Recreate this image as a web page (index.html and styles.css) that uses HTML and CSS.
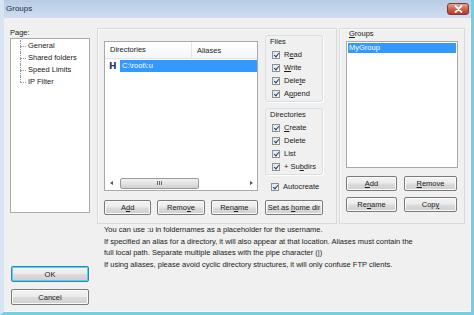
FILE: index.html
```html
<!DOCTYPE html>
<html>
<head>
    <meta charset="UTF-8">
    <title>Groups</title>
    <link rel="stylesheet" href="styles.css">
</head>
<body>
    <div class="window">
        <div class="titlebar">
            <span class="title">Groups</span>
            <span class="close">
                <svg width="9" height="8" viewBox="0 0 9 8"><path d="M1.5 1 L7.5 7 M7.5 1 L1.5 7" stroke="#fff" stroke-width="1.8" stroke-linecap="round"/></svg>
            </span>
        </div>
        <div class="client">
            <div class="side">
                <div class="label">Page:</div>
                <div class="tree">
                    <div class="node">General</div>
                    <div class="node">Shared folders</div>
                    <div class="node">Speed Limits</div>
                    <div class="node last">IP Filter</div>
                </div>
                <div class="dialog-buttons">
                    <button class="btn default">OK</button>
                    <button class="btn">Cancel</button>
                </div>
            </div>
            <div class="main">
                <div class="panels">
                    <div class="panel shares">
                        <div class="listview">
                            <div class="lv-head">
                                <span class="col-dir">Directories</span>
                                <span class="col-alias">Aliases</span>
                            </div>
                            <div class="lv-row">
                                <span class="home">H</span>
                                <span class="sel">C:\root\:u</span>
                            </div>
                            <div class="hscroll">
                                <span class="arrow left"></span>
                                <span class="track"><span class="thumb"><span class="grip"></span></span></span>
                                <span class="arrow right"></span>
                            </div>
                        </div>
                        <div class="perms">
                            <div class="groupbox">
                                <div class="legend">Files</div>
                                <div class="check"><span class="box"></span>R<u>e</u>ad</div>
                                <div class="check"><span class="box"></span><u>W</u>rite</div>
                                <div class="check"><span class="box"></span>Dele<u>t</u>e</div>
                                <div class="check"><span class="box"></span>A<u>p</u>pend</div>
                            </div>
                            <div class="groupbox">
                                <div class="legend">Directories</div>
                                <div class="check"><span class="box"></span><u>C</u>reate</div>
                                <div class="check"><span class="box"></span>Delete</div>
                                <div class="check"><span class="box"></span>List</div>
                                <div class="check"><span class="box"></span>+ Su<u>b</u>dirs</div>
                            </div>
                            <div class="check auto"><span class="box"></span>Autocreate</div>
                        </div>
                        <div class="row-buttons">
                            <button class="btn">A<u>d</u>d</button>
                            <button class="btn">Remo<u>v</u>e</button>
                            <button class="btn">Ren<u>a</u>me</button>
                        </div>
                        <button class="btn">Set as <u>h</u>ome dir</button>
                    </div>
                    <div class="panel groups">
                        <div class="label"><u>G</u>roups</div>
                        <div class="listbox">
                            <div class="item selected">MyGroup</div>
                        </div>
                        <div class="group-buttons">
                            <button class="btn"><u>A</u>dd</button>
                            <button class="btn"><u>R</u>emove</button>
                            <button class="btn">Re<u>n</u>ame</button>
                            <button class="btn">Cop<u>y</u></button>
                        </div>
                    </div>
                </div>
                <div class="notes">
                    <p>You can use :u in foldernames as a placeholder for the username.</p>
                    <p>If specified an alias for a directory, it will also appear at that location. Aliases must contain the<br>full local path. Separate multiple aliases with the pipe character (|)</p>
                    <p>If using aliases, please avoid cyclic directory structures, it will only confuse FTP clients.</p>
                </div>
            </div>
        </div>
    </div>
</body>
</html>
```

FILE: styles.css
```css
* {
    box-sizing: border-box;
}
body {
    margin: 0;
    font-family: "Liberation Sans", Arial, sans-serif;
    font-size: 7.5px;
    color: #1a1a1a;
    background: #fff;
}
.window {
    width: 474px;
    height: 315px;
    display: flex;
    flex-direction: column;
    background: #f0f0f0;
    border-left: 4px solid #d7e4f2;
    border-right: 3px solid #74cfe6;
    border-bottom: 3px solid #74cfe6;
}
.titlebar {
    height: 18px;
    flex: none;
    display: flex;
    align-items: center;
    justify-content: space-between;
    padding: 0 2px 1px 2px;
    background: linear-gradient(#b7cce5, #cfdeef);
}
.title {
    font-size: 8px;
    color: #1e2a3a;
}
.close {
    width: 22px;
    height: 12px;
    margin-top: 1px;
    display: flex;
    align-items: center;
    justify-content: center;
    border: 1px solid #7d3a30;
    border-radius: 3px;
    background: linear-gradient(#e6a497, #d0604c 50%, #b8372a);
}
.client {
    flex: 1;
    display: flex;
    gap: 7px;
    padding: 10px 0 0 6px;
    border-right: 1px solid #fbfbfb;
    border-bottom: 1px solid #fbfbfb;
}

/* left column */
.side {
    width: 80px;
    display: flex;
    flex-direction: column;
    padding-bottom: 6px;
}
.label {
    height: 9px;
    line-height: 9px;
}
.tree {
    margin-top: 1px;
    height: 175px;
    background: #fff;
    border: 1px solid #a9a9a9;
    padding-top: 1px;
    position: relative;
}
.node {
    position: relative;
    height: 12px;
    line-height: 12px;
    padding-left: 17px;
}
.node::before {
    content: "";
    position: absolute;
    left: 9px;
    top: 6px;
    width: 6px;
    border-top: 1px dotted #9a9a9a;
}
.node::after {
    content: "";
    position: absolute;
    left: 9px;
    top: 0;
    height: 12px;
    border-left: 1px dotted #9a9a9a;
}
.node.last::after {
    height: 6px;
}
.dialog-buttons {
    margin-top: auto;
    display: flex;
    flex-direction: column;
    gap: 7px;
    padding-left: 1px;
    width: 79px;
}
.dialog-buttons .btn {
    height: 16px;
}

/* buttons */
.btn {
    height: 15px;
    padding: 0;
    font-family: inherit;
    font-size: 7.5px;
    color: #1a1a1a;
    border: 1px solid #7a7a7a;
    border-radius: 2px;
    background: linear-gradient(#f3f3f3, #ebebeb 48%, #dcdcdc 52%, #cfcfcf);
    box-shadow: inset 0 0 0 1px #fafafa;
}
.btn.default {
    border-color: #3c7fb1;
    box-shadow: inset 0 0 0 1px #48d7f8;
}

/* middle + right panels */
.main {
    flex: 1;
    display: flex;
    flex-direction: column;
}
.panels {
    display: flex;
    gap: 2px;
}
.panel {
    border: 1px solid #d9d9d9;
    box-shadow: inset 1px 1px 0 #fafafa;
}
.shares {
    width: 240px;
    display: grid;
    grid-template-columns: 154px 58px;
    column-gap: 7px;
    row-gap: 7px;
    padding: 6px 0 8px 6px;
}
.listview {
    margin-top: 6px;
    height: 150px;
    display: flex;
    flex-direction: column;
    background: #fff;
    border: 1px solid #a9a9a9;
}
.lv-head {
    height: 17px;
    display: flex;
    align-items: center;
    background: linear-gradient(#ffffff, #f4f5f7);
    border-bottom: 1px solid #e3e4e6;
}
.col-dir {
    width: 87px;
    padding-left: 5px;
    border-right: 1px solid #e3e4e6;
    line-height: 16px;
}
.col-alias {
    padding-left: 5px;
}
.lv-row {
    margin-top: 1px;
    height: 12px;
    display: flex;
    align-items: center;
}
.home {
    width: 15px;
    padding-left: 4px;
    font-family: "DejaVu Sans", sans-serif;
    font-weight: bold;
    font-size: 9px;
    color: #223a66;
}
.sel {
    flex: 1;
    height: 12px;
    line-height: 12px;
    padding-left: 2px;
    background: #3399ff;
    color: #fff;
}
.hscroll {
    margin-top: auto;
    height: 12px;
    display: flex;
    align-items: center;
    margin-bottom: 1px;
}
.arrow {
    width: 12px;
    display: flex;
    justify-content: center;
}
.arrow::before {
    content: "";
    border-top: 2.5px solid transparent;
    border-bottom: 2.5px solid transparent;
}
.arrow.left::before {
    border-right: 3px solid #555;
}
.arrow.right::before {
    border-left: 3px solid #555;
}
.track {
    flex: 1;
    height: 11px;
    padding-left: 3px;
    display: flex;
}
.thumb {
    width: 79px;
    height: 11px;
    border: 1px solid #9a9a9a;
    border-radius: 2px;
    background: linear-gradient(#f2f2f2, #e2e2e2 50%, #d0d0d0);
    display: flex;
    align-items: center;
    justify-content: center;
}
.grip {
    width: 5px;
    height: 4px;
    border-left: 1px solid #666;
    border-right: 1px solid #666;
    background: linear-gradient(90deg, transparent 40%, #666 40%, #666 60%, transparent 60%);
}
.perms {
    display: flex;
    flex-direction: column;
    gap: 6px;
}
.groupbox {
    border: 1px solid #d5dfe5;
    border-radius: 3px;
    padding-bottom: 1px;
    box-shadow: 1px 1px 0 #fff;
}
.legend {
    height: 12px;
    line-height: 11px;
    padding-left: 4px;
}
.check {
    height: 13px;
    display: flex;
    align-items: center;
    padding-left: 6px;
    white-space: nowrap;
}
.check.auto {
    margin-top: -1px;
}
.box {
    width: 8px;
    height: 8px;
    margin-right: 4px;
    flex: none;
    border: 1px solid #8e8f8f;
    background: linear-gradient(135deg, #dbe5ef, #f6f8fa);
    position: relative;
}
.box::after {
    content: "";
    position: absolute;
    left: 2px;
    top: 0;
    width: 2px;
    height: 4px;
    border-right: 1.3px solid #1f3d6e;
    border-bottom: 1.3px solid #1f3d6e;
    transform: rotate(40deg);
}
.row-buttons {
    display: flex;
    gap: 6px;
}
.row-buttons .btn {
    flex: 1;
}
.groups {
    width: 126px;
    padding: 0 6px 8px 6px;
}
.groups .label {
    padding-left: 3px;
}
.listbox {
    margin-top: 3px;
    height: 127px;
    background: #fff;
    border: 1px solid #a9a9a9;
    padding: 1px;
}
.item {
    height: 10px;
    line-height: 10px;
    padding-left: 1px;
}
.item.selected {
    background: #3399ff;
    color: #fff;
}
.group-buttons {
    margin-top: 8px;
    display: grid;
    grid-template-columns: 51px 53px;
    column-gap: 7px;
    row-gap: 6px;
}
.notes {
    padding-left: 7px;
    line-height: 11.6px;
}
.notes p {
    margin: 0;
}
```
